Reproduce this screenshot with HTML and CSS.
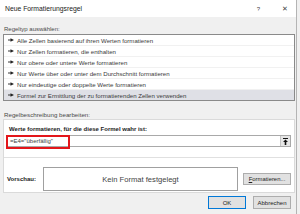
FILE: index.html
```html
<!DOCTYPE html>
<html lang="de">
<head>
  <meta charset="UTF-8">
  <title>Neue Formatierungsregel</title>
  <link rel="stylesheet" href="styles.css">
</head>
<body>
  <div class="dialog">
    <div class="titlebar">
      <span class="title">Neue Formatierungsregel</span>
      <span class="help">?</span>
      <span class="close">✕</span>
    </div>

    <div class="content">
      <div class="label">Regeltyp auswählen:</div>
      <ul class="rules">
        <li><svg class="pointer" width="6" height="4" viewBox="0 0 6 4"><path d="M0 2H3" stroke="#222" stroke-width="0.9"/><path d="M2.5 0.3L6 2L2.5 3.7Z" fill="#222"/></svg>Alle Zellen basierend auf ihren Werten formatieren</li>
        <li><svg class="pointer" width="6" height="4" viewBox="0 0 6 4"><path d="M0 2H3" stroke="#222" stroke-width="0.9"/><path d="M2.5 0.3L6 2L2.5 3.7Z" fill="#222"/></svg>Nur Zellen formatieren, die enthalten</li>
        <li><svg class="pointer" width="6" height="4" viewBox="0 0 6 4"><path d="M0 2H3" stroke="#222" stroke-width="0.9"/><path d="M2.5 0.3L6 2L2.5 3.7Z" fill="#222"/></svg>Nur obere oder untere Werte formatieren</li>
        <li><svg class="pointer" width="6" height="4" viewBox="0 0 6 4"><path d="M0 2H3" stroke="#222" stroke-width="0.9"/><path d="M2.5 0.3L6 2L2.5 3.7Z" fill="#222"/></svg>Nur Werte über oder unter dem Durchschnitt formatieren</li>
        <li><svg class="pointer" width="6" height="4" viewBox="0 0 6 4"><path d="M0 2H3" stroke="#222" stroke-width="0.9"/><path d="M2.5 0.3L6 2L2.5 3.7Z" fill="#222"/></svg>Nur eindeutige oder doppelte Werte formatieren</li>
        <li class="selected"><svg class="pointer" width="6" height="4" viewBox="0 0 6 4"><path d="M0 2H3" stroke="#222" stroke-width="0.9"/><path d="M2.5 0.3L6 2L2.5 3.7Z" fill="#222"/></svg>Formel zur Ermittlung der zu formatierenden Zellen verwenden</li>
      </ul>

      <div class="label label-desc">Regelbeschreibung bearbeiten:</div>
      <div class="panel">
        <div class="panel-top">
          <div class="formula-label">Werte formatieren, für die diese Formel wahr ist:</div>
          <div class="formula">
            <span class="formula-text">=E4="überfällig"</span>
            <span class="ref-btn">
              <svg width="5" height="7" viewBox="0 0 5 7"><path d="M0 0.5H5" stroke="#111" stroke-width="1"/><path d="M2.5 1.5L5 4H3.3V7H1.7V4H0Z" fill="#111"/></svg>
            </span>
            <span class="highlight"></span>
          </div>
        </div>
        <div class="preview-row">
          <span class="preview-label">Vorschau:</span>
          <div class="preview">Kein Format festgelegt</div>
          <button class="btn btn-format"><u>F</u>ormatieren...</button>
        </div>
      </div>

      <div class="actions">
        <button class="btn btn-default">OK</button>
        <button class="btn">Abbrechen</button>
      </div>
    </div>
  </div>
</body>
</html>
```

FILE: styles.css
```css
body {
  margin: 0;
  width: 300px;
  height: 214px;
  overflow: hidden;
  background-color: #f0f0f0;
  font-family: "Liberation Sans", Arial, sans-serif;
  color: #333;
}

.dialog {
  box-sizing: border-box;
  width: 297px;
  height: 214px;
  border-right: 1px solid #b4b4b4;
}

.titlebar {
  display: flex;
  align-items: center;
  height: 17px;
  background-color: #fff;
  padding-left: 5px;
}

.title {
  flex-grow: 1;
  font-size: 6.8px;
  color: #222;
}

.help {
  font-size: 6px;
  color: #444;
  margin-right: 22px;
}

.close {
  font-size: 6.5px;
  color: #444;
  margin-right: 8px;
}

.content {
  padding: 0 1px 0 3px;
}

.label {
  font-size: 6px;
  line-height: 8px;
  margin-top: 8px;
  padding-left: 1px;
  color: #4a4a4a;
}

.label-desc {
  font-size: 6.2px;
  margin-top: 10px;
}

.rules {
  list-style: none;
  margin: 1px 0 0;
  padding: 0;
  background-color: #fff;
  border: 1px solid #8a8a8a;
}

.rules li {
  display: flex;
  align-items: center;
  height: 10px;
  border-bottom: 1px solid #f1f1f1;
  font-size: 6.1px;
  color: #3a3a3a;
  padding-left: 4px;
  white-space: nowrap;
}

.rules li:last-child {
  border-bottom: none;
}

.rules li.selected {
  background-color: #dfe0e6;
}

.pointer {
  margin-right: 3px;
}

.panel {
  background-color: #fff;
  border: 1px solid #dadada;
}

.panel-top {
  padding: 5px 3px 10px;
  border-bottom: 1px solid #e0e0e0;
}

.formula-label {
  font-size: 6px;
  font-weight: bold;
  line-height: 8px;
  padding-left: 2px;
  color: #222;
}

.formula {
  position: relative;
  display: flex;
  align-items: center;
  height: 12px;
  margin-top: 2px;
  box-sizing: border-box;
  border: 1px solid #a9a9a9;
}

.formula-text {
  flex-grow: 1;
  font-size: 6px;
  color: #444;
  padding-left: 2px;
}

.ref-btn {
  display: flex;
  align-items: center;
  justify-content: center;
  width: 9px;
  height: 10px;
  background-color: #e6e6e6;
  border-left: 1px solid #c4c4c4;
}

.highlight {
  position: absolute;
  left: -2px;
  top: -1px;
  width: 64px;
  height: 14px;
  box-sizing: border-box;
  border: 2px solid #e3161b;
}

.preview-row {
  display: flex;
  align-items: center;
  padding: 9px 3px 1px;
}

.preview-label {
  width: 36px;
  font-size: 6px;
  font-weight: bold;
  color: #222;
}

.preview {
  display: flex;
  align-items: center;
  justify-content: center;
  width: 195px;
  height: 24px;
  box-sizing: border-box;
  border: 1px solid #a0a0a0;
  font-size: 7.6px;
  color: #444;
}

.btn {
  box-sizing: border-box;
  height: 13px;
  width: 38px;
  padding: 0;
  background-color: #e1e1e1;
  border: 1px solid #adadad;
  font-family: "Liberation Sans", Arial, sans-serif;
  font-size: 6px;
  color: #222;
}

.btn-format {
  width: 48px;
  height: 12px;
  margin-left: 5px;
  font-size: 5.9px;
}

.actions {
  display: flex;
  justify-content: flex-end;
  gap: 7px;
  margin-top: 3px;
  padding-right: 4px;
}

.btn-default {
  border-color: #0078d7;
}
```
